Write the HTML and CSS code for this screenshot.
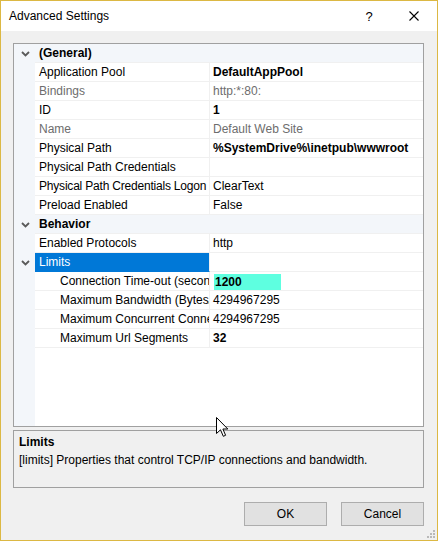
FILE: index.html
```
<!DOCTYPE html>
<html>
<head>
<meta charset="utf-8">
<link rel="stylesheet" href="styles.css">
</head>
<body>
<div class="window">
  <div class="titlebar">
    <span class="title">Advanced Settings</span>
    <span class="help">?</span>
    <span class="close"><svg width="10" height="10" viewBox="0 0 10 10"><path d="M0.5 0.5 L9.5 9.5 M9.5 0.5 L0.5 9.5" stroke="#000" stroke-width="1.1" fill="none"/></svg></span>
  </div>
  <div class="body">
    <div class="grid">
      <div class="row cat"><span class="gut"><svg class="chev" width="9" height="6" viewBox="0 0 9 6"><path d="M1 1 L4.5 4.5 L8 1" stroke="#5a5a5a" stroke-width="1.8" fill="none"/></svg></span><span class="name">(General)</span><span class="val"></span></div>
      <div class="row"><span class="gut"></span><span class="name">Application Pool</span><span class="val b">DefaultAppPool</span></div>
      <div class="row dis"><span class="gut"></span><span class="name">Bindings</span><span class="val">http:*:80:</span></div>
      <div class="row"><span class="gut"></span><span class="name">ID</span><span class="val b">1</span></div>
      <div class="row dis"><span class="gut"></span><span class="name">Name</span><span class="val">Default Web Site</span></div>
      <div class="row"><span class="gut"></span><span class="name">Physical Path</span><span class="val b">%SystemDrive%\inetpub\wwwroot</span></div>
      <div class="row"><span class="gut"></span><span class="name">Physical Path Credentials</span><span class="val"></span></div>
      <div class="row"><span class="gut"></span><span class="name tight">Physical Path Credentials Logon</span><span class="val">ClearText</span></div>
      <div class="row"><span class="gut"></span><span class="name">Preload Enabled</span><span class="val">False</span></div>
      <div class="row cat"><span class="gut"><svg class="chev" width="9" height="6" viewBox="0 0 9 6"><path d="M1 1 L4.5 4.5 L8 1" stroke="#5a5a5a" stroke-width="1.8" fill="none"/></svg></span><span class="name">Behavior</span><span class="val"></span></div>
      <div class="row"><span class="gut"></span><span class="name">Enabled Protocols</span><span class="val">http</span></div>
      <div class="row"><span class="gut"><svg class="chev" width="9" height="6" viewBox="0 0 9 6"><path d="M1 1 L4.5 4.5 L8 1" stroke="#5a5a5a" stroke-width="1.8" fill="none"/></svg></span><span class="name sel">Limits</span><span class="val"></span></div>
      <div class="row"><span class="gut"></span><span class="name sub">Connection Time-out (seconds)</span><span class="val b"><span class="hl">1200</span></span></div>
      <div class="row"><span class="gut"></span><span class="name sub">Maximum Bandwidth (Bytes/second)</span><span class="val">4294967295</span></div>
      <div class="row"><span class="gut"></span><span class="name sub">Maximum Concurrent Connections</span><span class="val">4294967295</span></div>
      <div class="row"><span class="gut"></span><span class="name sub">Maximum Url Segments</span><span class="val b">32</span></div>
      <div class="filler"><span class="gut"></span></div>
    </div>
    <div class="desc">
      <div class="desc-title">Limits</div>
      <div class="desc-text">[limits] Properties that control TCP/IP connections and bandwidth.</div>
    </div>
    <div class="buttons">
      <button class="btn">OK</button>
      <button class="btn">Cancel</button>
    </div>
  </div>
  <svg class="grip" width="9" height="9" viewBox="0 0 9 9"><g fill="#b9b9b9"><rect x="6" y="0" width="2" height="2"/><rect x="3" y="3" width="2" height="2"/><rect x="6" y="3" width="2" height="2"/><rect x="0" y="6" width="2" height="2"/><rect x="3" y="6" width="2" height="2"/><rect x="6" y="6" width="2" height="2"/></g></svg>
  <svg class="cursor" width="13" height="21" viewBox="0 0 13 21"><path d="M0.5 0.5 L0.5 16.5 L4.5 12.8 L7.3 19.3 L9.6 18.3 L6.9 12 L11.8 12 Z" fill="#fff" stroke="#000" stroke-width="1" stroke-linejoin="miter"/></svg>
</div>
</body>
</html>
```
FILE: styles.css
```
html, body {
  margin: 0;
  padding: 0;
}
body {
  width: 438px;
  height: 541px;
  overflow: hidden;
  font-family: "Liberation Sans", Arial, sans-serif;
  font-size: 12px;
  color: #000;
}
.window {
  position: relative;
  width: 438px;
  height: 541px;
  box-sizing: border-box;
  border: 1px solid #dcb843;
  background: #f0f0f0;
  display: flex;
  flex-direction: column;
}
.titlebar {
  height: 30px;
  background: #fff;
  display: flex;
  align-items: center;
  flex: none;
}
.title {
  padding-left: 8px;
  flex: 1;
  font-size: 12px;
}
.help {
  width: 20px;
  text-align: center;
  font-size: 13px;
  margin-right: 30px;
}
.close {
  width: 10px;
  height: 10px;
  margin-right: 18px;
  display: flex;
}
.body {
  flex: 1;
  padding: 12px 12px 0 12px;
  display: flex;
  flex-direction: column;
}
.grid {
  height: 384px;
  box-sizing: border-box;
  border: 1px solid #a0a0a0;
  background: #fff;
  display: flex;
  flex-direction: column;
  width: 411px;
}
.row {
  display: flex;
  height: 19px;
  flex: none;
}
.gut {
  width: 21px;
  flex: none;
  background: #f3f6fa;
  display: flex;
  align-items: center;
  justify-content: center;
}
.chev {
  margin-left: 2px;
  margin-top: 1px;
}
.name {
  width: 175px;
  flex: none;
  box-sizing: border-box;
  border-bottom: 1px solid #f0f0f0;
  border-right: 1px solid #f0f0f0;
  padding: 1px 0 0 4px;
  line-height: 17px;
  white-space: nowrap;
  overflow: hidden;
}
.name.tight {
  letter-spacing: -0.2px;
}
.val {
  flex: 1;
  box-sizing: border-box;
  border-bottom: 1px solid #f0f0f0;
  padding: 1px 0 0 3px;
  line-height: 17px;
  white-space: nowrap;
  overflow: hidden;
}
.b {
  font-weight: bold;
}
.dis .name, .dis .val {
  color: #6d6d6d;
}
.cat .name, .cat .val {
  background: #f3f6fa;
  border-right: none;
  font-weight: bold;
}
.name.sel {
  background: #0078d7;
  color: #fff;
  border-bottom-color: #0078d7;
}
.name.sub {
  padding-left: 25px;
}
.hl {
  display: inline-block;
  width: 66px;
  height: 17px;
  margin-left: 1px;
  margin-top: 1px;
  padding-left: 1px;
  background: #5effe0;
  line-height: 16px;
  vertical-align: top;
}
.filler {
  flex: 1;
  display: flex;
}
.desc {
  margin-top: 3px;
  height: 58px;
  width: 411px;
  box-sizing: border-box;
  border: 1px solid #a0a0a0;
  background: #f0f0f0;
  padding: 2px 5px 0 5px;
}
.desc-title {
  font-weight: bold;
  line-height: 18px;
}
.desc-text {
  line-height: 18px;
}
.buttons {
  display: flex;
  justify-content: flex-end;
  gap: 14px;
  margin-top: 14px;
  width: 411px;
}
.btn {
  width: 83px;
  height: 24px;
  box-sizing: border-box;
  border: 1px solid #adadad;
  background: #e1e1e1;
  font-family: "Liberation Sans", Arial, sans-serif;
  font-size: 12px;
  color: #000;
  padding: 0;
  margin: 0;
}
.grip {
  position: absolute;
  right: 1px;
  bottom: 1px;
}
.cursor {
  position: absolute;
  left: 215px;
  top: 416px;
}
```
